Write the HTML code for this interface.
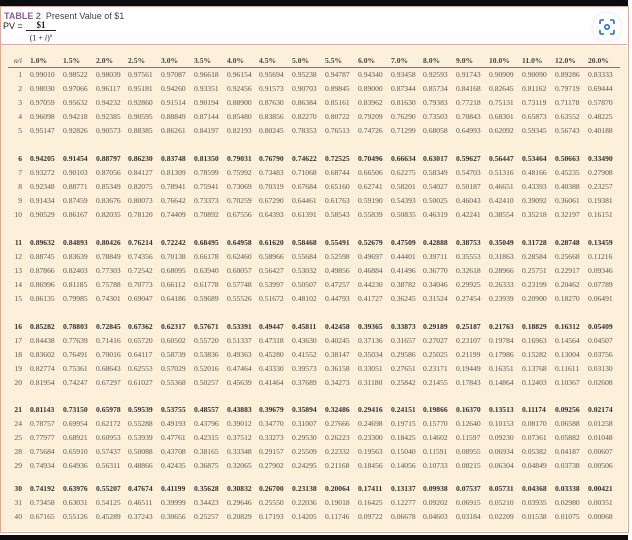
<!DOCTYPE html>
<html><head><meta charset="utf-8"><style>
*{margin:0;padding:0;box-sizing:border-box}
body{width:632px;height:540px;overflow:hidden;background:#fff;position:relative;font-family:"Liberation Serif",serif}
.top{position:absolute;left:0;top:0;width:628px;height:6px;background:#0d0d0d}
.bot{position:absolute;left:0;top:535px;width:628px;height:5px;background:#0d0d0d}
.panel{position:absolute;left:0;top:6px;width:629px;height:527px;border:1.5px solid #f0a483;background:#fff}
.hdr{position:absolute;left:0;top:0;width:626px;height:38px;background:#fff;border-bottom:1.5px solid #f0a483}
.cream{position:absolute;left:0;top:39px;width:626px;height:485px;background:#fcf0da}
.t2{position:absolute;left:3px;top:4px;font:9px "Liberation Sans",sans-serif;color:#444}
.t2 b{color:#8e5a9e;font-weight:bold}
.pv{position:absolute;left:2px;top:14px;font:9px "Liberation Sans",sans-serif;color:#222}
.frac{position:absolute;left:25px;top:13px;font:9px "Liberation Serif",serif;color:#222;text-align:center;width:30px}
.frac .n{font-weight:bold;border-bottom:1px solid #222;line-height:10px}
.frac .d{font-size:8px;line-height:11px}
.icon{position:absolute;left:592px;top:6px;width:28px;height:28px;border-radius:50%;background:#fff;box-shadow:0 0 4px rgba(0,0,0,.12)}
.row{position:absolute;left:0;height:14px;font-size:7.6px;color:#555;white-space:nowrap;line-height:14px}
.row span{position:absolute;top:0}
.row .n{width:22px;text-align:right;left:0}
.b{font-weight:bold;color:#333}
.hrow{color:#444;font-weight:bold}
.hrow .n{font-style:italic;font-weight:normal}
.line{position:absolute;left:8px;top:67px;width:612px;height:1px;background:#777}
</style></head><body>
<div class="top"></div>
<div class="panel">
<div class="hdr">
<div class="t2"><b>TABLE 2</b>&nbsp; Present Value of $1</div>
<div class="pv">PV =</div>
<div class="frac"><div class="n">$1</div><div class="d">(1 + <i>i</i>)<sup style="font-size:5px">n</sup></div></div>
<div class="icon"><svg width="28" height="28" viewBox="0 0 28 28" fill="none" stroke="#1a6fd0" stroke-width="1.6"><path d="M7 11V8.5Q7 7 8.5 7H11M17 7h2.5Q21 7 21 8.5V11M21 17v2.5Q21 21 19.5 21H17M11 21H8.5Q7 21 7 19.5V17"/><circle cx="14" cy="14" r="2.2"/></svg></div>
</div>
<div class="cream"></div>
</div>
<div class="bot"></div>
<div class="line"></div>
<div id="t"></div>
<div class="row hrow" style="top:54px"><span class="n">n/i</span><span style="left:30px">1.0%</span><span style="left:63px">1.5%</span><span style="left:96px">2.0%</span><span style="left:128px">2.5%</span><span style="left:161px">3.0%</span><span style="left:194px">3.5%</span><span style="left:227px">4.0%</span><span style="left:259px">4.5%</span><span style="left:292px">5.0%</span><span style="left:325px">5.5%</span><span style="left:358px">6.0%</span><span style="left:391px">7.0%</span><span style="left:423px">8.0%</span><span style="left:456px">9.0%</span><span style="left:489px">10.0%</span><span style="left:522px">11.0%</span><span style="left:555px">12.0%</span><span style="left:588px">20.0%</span></div>
<div class="row" style="top:68px"><span class="n">1</span><span style="left:30px">0.99010</span><span style="left:63px">0.98522</span><span style="left:96px">0.98039</span><span style="left:128px">0.97561</span><span style="left:161px">0.97087</span><span style="left:194px">0.96618</span><span style="left:227px">0.96154</span><span style="left:259px">0.95694</span><span style="left:292px">0.95238</span><span style="left:325px">0.94787</span><span style="left:358px">0.94340</span><span style="left:391px">0.93458</span><span style="left:423px">0.92593</span><span style="left:456px">0.91743</span><span style="left:489px">0.90909</span><span style="left:522px">0.90090</span><span style="left:555px">0.89286</span><span style="left:588px">0.83333</span></div>
<div class="row" style="top:82px"><span class="n">2</span><span style="left:30px">0.98030</span><span style="left:63px">0.97066</span><span style="left:96px">0.96117</span><span style="left:128px">0.95181</span><span style="left:161px">0.94260</span><span style="left:194px">0.93351</span><span style="left:227px">0.92456</span><span style="left:259px">0.91573</span><span style="left:292px">0.90703</span><span style="left:325px">0.89845</span><span style="left:358px">0.89000</span><span style="left:391px">0.87344</span><span style="left:423px">0.85734</span><span style="left:456px">0.84168</span><span style="left:489px">0.82645</span><span style="left:522px">0.81162</span><span style="left:555px">0.79719</span><span style="left:588px">0.69444</span></div>
<div class="row" style="top:96px"><span class="n">3</span><span style="left:30px">0.97059</span><span style="left:63px">0.95632</span><span style="left:96px">0.94232</span><span style="left:128px">0.92860</span><span style="left:161px">0.91514</span><span style="left:194px">0.90194</span><span style="left:227px">0.88900</span><span style="left:259px">0.87630</span><span style="left:292px">0.86384</span><span style="left:325px">0.85161</span><span style="left:358px">0.83962</span><span style="left:391px">0.81630</span><span style="left:423px">0.79383</span><span style="left:456px">0.77218</span><span style="left:489px">0.75131</span><span style="left:522px">0.73119</span><span style="left:555px">0.71178</span><span style="left:588px">0.57870</span></div>
<div class="row" style="top:110px"><span class="n">4</span><span style="left:30px">0.96098</span><span style="left:63px">0.94218</span><span style="left:96px">0.92385</span><span style="left:128px">0.90595</span><span style="left:161px">0.88849</span><span style="left:194px">0.87144</span><span style="left:227px">0.85480</span><span style="left:259px">0.83856</span><span style="left:292px">0.82270</span><span style="left:325px">0.80722</span><span style="left:358px">0.79209</span><span style="left:391px">0.76290</span><span style="left:423px">0.73503</span><span style="left:456px">0.70843</span><span style="left:489px">0.68301</span><span style="left:522px">0.65873</span><span style="left:555px">0.63552</span><span style="left:588px">0.48225</span></div>
<div class="row" style="top:124px"><span class="n">5</span><span style="left:30px">0.95147</span><span style="left:63px">0.92826</span><span style="left:96px">0.90573</span><span style="left:128px">0.88385</span><span style="left:161px">0.86261</span><span style="left:194px">0.84197</span><span style="left:227px">0.82193</span><span style="left:259px">0.80245</span><span style="left:292px">0.78353</span><span style="left:325px">0.76513</span><span style="left:358px">0.74726</span><span style="left:391px">0.71299</span><span style="left:423px">0.68058</span><span style="left:456px">0.64993</span><span style="left:489px">0.62092</span><span style="left:522px">0.59345</span><span style="left:555px">0.56743</span><span style="left:588px">0.40188</span></div>
<div class="row b" style="top:152px"><span class="n">6</span><span style="left:30px">0.94205</span><span style="left:63px">0.91454</span><span style="left:96px">0.88797</span><span style="left:128px">0.86230</span><span style="left:161px">0.83748</span><span style="left:194px">0.81350</span><span style="left:227px">0.79031</span><span style="left:259px">0.76790</span><span style="left:292px">0.74622</span><span style="left:325px">0.72525</span><span style="left:358px">0.70496</span><span style="left:391px">0.66634</span><span style="left:423px">0.63017</span><span style="left:456px">0.59627</span><span style="left:489px">0.56447</span><span style="left:522px">0.53464</span><span style="left:555px">0.50663</span><span style="left:588px">0.33490</span></div>
<div class="row" style="top:166px"><span class="n">7</span><span style="left:30px">0.93272</span><span style="left:63px">0.90103</span><span style="left:96px">0.87056</span><span style="left:128px">0.84127</span><span style="left:161px">0.81309</span><span style="left:194px">0.78599</span><span style="left:227px">0.75992</span><span style="left:259px">0.73483</span><span style="left:292px">0.71068</span><span style="left:325px">0.68744</span><span style="left:358px">0.66506</span><span style="left:391px">0.62275</span><span style="left:423px">0.58349</span><span style="left:456px">0.54703</span><span style="left:489px">0.51316</span><span style="left:522px">0.48166</span><span style="left:555px">0.45235</span><span style="left:588px">0.27908</span></div>
<div class="row" style="top:180px"><span class="n">8</span><span style="left:30px">0.92348</span><span style="left:63px">0.88771</span><span style="left:96px">0.85349</span><span style="left:128px">0.82075</span><span style="left:161px">0.78941</span><span style="left:194px">0.75941</span><span style="left:227px">0.73069</span><span style="left:259px">0.70319</span><span style="left:292px">0.67684</span><span style="left:325px">0.65160</span><span style="left:358px">0.62741</span><span style="left:391px">0.58201</span><span style="left:423px">0.54027</span><span style="left:456px">0.50187</span><span style="left:489px">0.46651</span><span style="left:522px">0.43393</span><span style="left:555px">0.40388</span><span style="left:588px">0.23257</span></div>
<div class="row" style="top:194px"><span class="n">9</span><span style="left:30px">0.91434</span><span style="left:63px">0.87459</span><span style="left:96px">0.83676</span><span style="left:128px">0.80073</span><span style="left:161px">0.76642</span><span style="left:194px">0.73373</span><span style="left:227px">0.70259</span><span style="left:259px">0.67290</span><span style="left:292px">0.64461</span><span style="left:325px">0.61763</span><span style="left:358px">0.59190</span><span style="left:391px">0.54393</span><span style="left:423px">0.50025</span><span style="left:456px">0.46043</span><span style="left:489px">0.42410</span><span style="left:522px">0.39092</span><span style="left:555px">0.36061</span><span style="left:588px">0.19381</span></div>
<div class="row" style="top:208px"><span class="n">10</span><span style="left:30px">0.90529</span><span style="left:63px">0.86167</span><span style="left:96px">0.82035</span><span style="left:128px">0.78120</span><span style="left:161px">0.74409</span><span style="left:194px">0.70892</span><span style="left:227px">0.67556</span><span style="left:259px">0.64393</span><span style="left:292px">0.61391</span><span style="left:325px">0.58543</span><span style="left:358px">0.55839</span><span style="left:391px">0.50835</span><span style="left:423px">0.46319</span><span style="left:456px">0.42241</span><span style="left:489px">0.38554</span><span style="left:522px">0.35218</span><span style="left:555px">0.32197</span><span style="left:588px">0.16151</span></div>
<div class="row b" style="top:236px"><span class="n">11</span><span style="left:30px">0.89632</span><span style="left:63px">0.84893</span><span style="left:96px">0.80426</span><span style="left:128px">0.76214</span><span style="left:161px">0.72242</span><span style="left:194px">0.68495</span><span style="left:227px">0.64958</span><span style="left:259px">0.61620</span><span style="left:292px">0.58468</span><span style="left:325px">0.55491</span><span style="left:358px">0.52679</span><span style="left:391px">0.47509</span><span style="left:423px">0.42888</span><span style="left:456px">0.38753</span><span style="left:489px">0.35049</span><span style="left:522px">0.31728</span><span style="left:555px">0.28748</span><span style="left:588px">0.13459</span></div>
<div class="row" style="top:250px"><span class="n">12</span><span style="left:30px">0.88745</span><span style="left:63px">0.83639</span><span style="left:96px">0.78849</span><span style="left:128px">0.74356</span><span style="left:161px">0.70138</span><span style="left:194px">0.66178</span><span style="left:227px">0.62460</span><span style="left:259px">0.58966</span><span style="left:292px">0.55684</span><span style="left:325px">0.52598</span><span style="left:358px">0.49697</span><span style="left:391px">0.44401</span><span style="left:423px">0.39711</span><span style="left:456px">0.35553</span><span style="left:489px">0.31863</span><span style="left:522px">0.28584</span><span style="left:555px">0.25668</span><span style="left:588px">0.11216</span></div>
<div class="row" style="top:264px"><span class="n">13</span><span style="left:30px">0.87866</span><span style="left:63px">0.82403</span><span style="left:96px">0.77303</span><span style="left:128px">0.72542</span><span style="left:161px">0.68095</span><span style="left:194px">0.63940</span><span style="left:227px">0.60057</span><span style="left:259px">0.56427</span><span style="left:292px">0.53032</span><span style="left:325px">0.49856</span><span style="left:358px">0.46884</span><span style="left:391px">0.41496</span><span style="left:423px">0.36770</span><span style="left:456px">0.32618</span><span style="left:489px">0.28966</span><span style="left:522px">0.25751</span><span style="left:555px">0.22917</span><span style="left:588px">0.09346</span></div>
<div class="row" style="top:278px"><span class="n">14</span><span style="left:30px">0.86996</span><span style="left:63px">0.81185</span><span style="left:96px">0.75788</span><span style="left:128px">0.70773</span><span style="left:161px">0.66112</span><span style="left:194px">0.61778</span><span style="left:227px">0.57748</span><span style="left:259px">0.53997</span><span style="left:292px">0.50507</span><span style="left:325px">0.47257</span><span style="left:358px">0.44230</span><span style="left:391px">0.38782</span><span style="left:423px">0.34046</span><span style="left:456px">0.29925</span><span style="left:489px">0.26333</span><span style="left:522px">0.23199</span><span style="left:555px">0.20462</span><span style="left:588px">0.07789</span></div>
<div class="row" style="top:292px"><span class="n">15</span><span style="left:30px">0.86135</span><span style="left:63px">0.79985</span><span style="left:96px">0.74301</span><span style="left:128px">0.69047</span><span style="left:161px">0.64186</span><span style="left:194px">0.59689</span><span style="left:227px">0.55526</span><span style="left:259px">0.51672</span><span style="left:292px">0.48102</span><span style="left:325px">0.44793</span><span style="left:358px">0.41727</span><span style="left:391px">0.36245</span><span style="left:423px">0.31524</span><span style="left:456px">0.27454</span><span style="left:489px">0.23939</span><span style="left:522px">0.20900</span><span style="left:555px">0.18270</span><span style="left:588px">0.06491</span></div>
<div class="row b" style="top:320px"><span class="n">16</span><span style="left:30px">0.85282</span><span style="left:63px">0.78803</span><span style="left:96px">0.72845</span><span style="left:128px">0.67362</span><span style="left:161px">0.62317</span><span style="left:194px">0.57671</span><span style="left:227px">0.53391</span><span style="left:259px">0.49447</span><span style="left:292px">0.45811</span><span style="left:325px">0.42458</span><span style="left:358px">0.39365</span><span style="left:391px">0.33873</span><span style="left:423px">0.29189</span><span style="left:456px">0.25187</span><span style="left:489px">0.21763</span><span style="left:522px">0.18829</span><span style="left:555px">0.16312</span><span style="left:588px">0.05409</span></div>
<div class="row" style="top:334px"><span class="n">17</span><span style="left:30px">0.84438</span><span style="left:63px">0.77639</span><span style="left:96px">0.71416</span><span style="left:128px">0.65720</span><span style="left:161px">0.60502</span><span style="left:194px">0.55720</span><span style="left:227px">0.51337</span><span style="left:259px">0.47318</span><span style="left:292px">0.43630</span><span style="left:325px">0.40245</span><span style="left:358px">0.37136</span><span style="left:391px">0.31657</span><span style="left:423px">0.27027</span><span style="left:456px">0.23107</span><span style="left:489px">0.19784</span><span style="left:522px">0.16963</span><span style="left:555px">0.14564</span><span style="left:588px">0.04507</span></div>
<div class="row" style="top:348px"><span class="n">18</span><span style="left:30px">0.83602</span><span style="left:63px">0.76491</span><span style="left:96px">0.70016</span><span style="left:128px">0.64117</span><span style="left:161px">0.58739</span><span style="left:194px">0.53836</span><span style="left:227px">0.49363</span><span style="left:259px">0.45280</span><span style="left:292px">0.41552</span><span style="left:325px">0.38147</span><span style="left:358px">0.35034</span><span style="left:391px">0.29586</span><span style="left:423px">0.25025</span><span style="left:456px">0.21199</span><span style="left:489px">0.17986</span><span style="left:522px">0.15282</span><span style="left:555px">0.13004</span><span style="left:588px">0.03756</span></div>
<div class="row" style="top:362px"><span class="n">19</span><span style="left:30px">0.82774</span><span style="left:63px">0.75361</span><span style="left:96px">0.68643</span><span style="left:128px">0.62553</span><span style="left:161px">0.57029</span><span style="left:194px">0.52016</span><span style="left:227px">0.47464</span><span style="left:259px">0.43330</span><span style="left:292px">0.39573</span><span style="left:325px">0.36158</span><span style="left:358px">0.33051</span><span style="left:391px">0.27651</span><span style="left:423px">0.23171</span><span style="left:456px">0.19449</span><span style="left:489px">0.16351</span><span style="left:522px">0.13768</span><span style="left:555px">0.11611</span><span style="left:588px">0.03130</span></div>
<div class="row" style="top:376px"><span class="n">20</span><span style="left:30px">0.81954</span><span style="left:63px">0.74247</span><span style="left:96px">0.67297</span><span style="left:128px">0.61027</span><span style="left:161px">0.55368</span><span style="left:194px">0.50257</span><span style="left:227px">0.45639</span><span style="left:259px">0.41464</span><span style="left:292px">0.37689</span><span style="left:325px">0.34273</span><span style="left:358px">0.31180</span><span style="left:391px">0.25842</span><span style="left:423px">0.21455</span><span style="left:456px">0.17843</span><span style="left:489px">0.14864</span><span style="left:522px">0.12403</span><span style="left:555px">0.10367</span><span style="left:588px">0.02608</span></div>
<div class="row b" style="top:403px"><span class="n">21</span><span style="left:30px">0.81143</span><span style="left:63px">0.73150</span><span style="left:96px">0.65978</span><span style="left:128px">0.59539</span><span style="left:161px">0.53755</span><span style="left:194px">0.48557</span><span style="left:227px">0.43883</span><span style="left:259px">0.39679</span><span style="left:292px">0.35894</span><span style="left:325px">0.32486</span><span style="left:358px">0.29416</span><span style="left:391px">0.24151</span><span style="left:423px">0.19866</span><span style="left:456px">0.16370</span><span style="left:489px">0.13513</span><span style="left:522px">0.11174</span><span style="left:555px">0.09256</span><span style="left:588px">0.02174</span></div>
<div class="row" style="top:417px"><span class="n">24</span><span style="left:30px">0.78757</span><span style="left:63px">0.69954</span><span style="left:96px">0.62172</span><span style="left:128px">0.55288</span><span style="left:161px">0.49193</span><span style="left:194px">0.43796</span><span style="left:227px">0.39012</span><span style="left:259px">0.34770</span><span style="left:292px">0.31007</span><span style="left:325px">0.27666</span><span style="left:358px">0.24698</span><span style="left:391px">0.19715</span><span style="left:423px">0.15770</span><span style="left:456px">0.12640</span><span style="left:489px">0.10153</span><span style="left:522px">0.08170</span><span style="left:555px">0.06588</span><span style="left:588px">0.01258</span></div>
<div class="row" style="top:431px"><span class="n">25</span><span style="left:30px">0.77977</span><span style="left:63px">0.68921</span><span style="left:96px">0.60953</span><span style="left:128px">0.53939</span><span style="left:161px">0.47761</span><span style="left:194px">0.42315</span><span style="left:227px">0.37512</span><span style="left:259px">0.33273</span><span style="left:292px">0.29530</span><span style="left:325px">0.26223</span><span style="left:358px">0.23300</span><span style="left:391px">0.18425</span><span style="left:423px">0.14602</span><span style="left:456px">0.11597</span><span style="left:489px">0.09230</span><span style="left:522px">0.07361</span><span style="left:555px">0.05882</span><span style="left:588px">0.01048</span></div>
<div class="row" style="top:445px"><span class="n">28</span><span style="left:30px">0.75684</span><span style="left:63px">0.65910</span><span style="left:96px">0.57437</span><span style="left:128px">0.50088</span><span style="left:161px">0.43708</span><span style="left:194px">0.38165</span><span style="left:227px">0.33348</span><span style="left:259px">0.29157</span><span style="left:292px">0.25509</span><span style="left:325px">0.22332</span><span style="left:358px">0.19563</span><span style="left:391px">0.15040</span><span style="left:423px">0.11591</span><span style="left:456px">0.08955</span><span style="left:489px">0.06934</span><span style="left:522px">0.05382</span><span style="left:555px">0.04187</span><span style="left:588px">0.00607</span></div>
<div class="row" style="top:459px"><span class="n">29</span><span style="left:30px">0.74934</span><span style="left:63px">0.64936</span><span style="left:96px">0.56311</span><span style="left:128px">0.48866</span><span style="left:161px">0.42435</span><span style="left:194px">0.36875</span><span style="left:227px">0.32065</span><span style="left:259px">0.27902</span><span style="left:292px">0.24295</span><span style="left:325px">0.21168</span><span style="left:358px">0.18456</span><span style="left:391px">0.14056</span><span style="left:423px">0.10733</span><span style="left:456px">0.08215</span><span style="left:489px">0.06304</span><span style="left:522px">0.04849</span><span style="left:555px">0.03738</span><span style="left:588px">0.00506</span></div>
<div class="row b" style="top:482px"><span class="n">30</span><span style="left:30px">0.74192</span><span style="left:63px">0.63976</span><span style="left:96px">0.55207</span><span style="left:128px">0.47674</span><span style="left:161px">0.41199</span><span style="left:194px">0.35628</span><span style="left:227px">0.30832</span><span style="left:259px">0.26700</span><span style="left:292px">0.23138</span><span style="left:325px">0.20064</span><span style="left:358px">0.17411</span><span style="left:391px">0.13137</span><span style="left:423px">0.09938</span><span style="left:456px">0.07537</span><span style="left:489px">0.05731</span><span style="left:522px">0.04368</span><span style="left:555px">0.03338</span><span style="left:588px">0.00421</span></div>
<div class="row" style="top:496px"><span class="n">31</span><span style="left:30px">0.73458</span><span style="left:63px">0.63031</span><span style="left:96px">0.54125</span><span style="left:128px">0.46511</span><span style="left:161px">0.39999</span><span style="left:194px">0.34423</span><span style="left:227px">0.29646</span><span style="left:259px">0.25550</span><span style="left:292px">0.22036</span><span style="left:325px">0.19018</span><span style="left:358px">0.16425</span><span style="left:391px">0.12277</span><span style="left:423px">0.09202</span><span style="left:456px">0.06915</span><span style="left:489px">0.05210</span><span style="left:522px">0.03935</span><span style="left:555px">0.02980</span><span style="left:588px">0.00351</span></div>
<div class="row" style="top:510px"><span class="n">40</span><span style="left:30px">0.67165</span><span style="left:63px">0.55126</span><span style="left:96px">0.45289</span><span style="left:128px">0.37243</span><span style="left:161px">0.30656</span><span style="left:194px">0.25257</span><span style="left:227px">0.20829</span><span style="left:259px">0.17193</span><span style="left:292px">0.14205</span><span style="left:325px">0.11746</span><span style="left:358px">0.09722</span><span style="left:391px">0.06678</span><span style="left:423px">0.04603</span><span style="left:456px">0.03184</span><span style="left:489px">0.02209</span><span style="left:522px">0.01538</span><span style="left:555px">0.01075</span><span style="left:588px">0.00068</span></div>
</body></html>
